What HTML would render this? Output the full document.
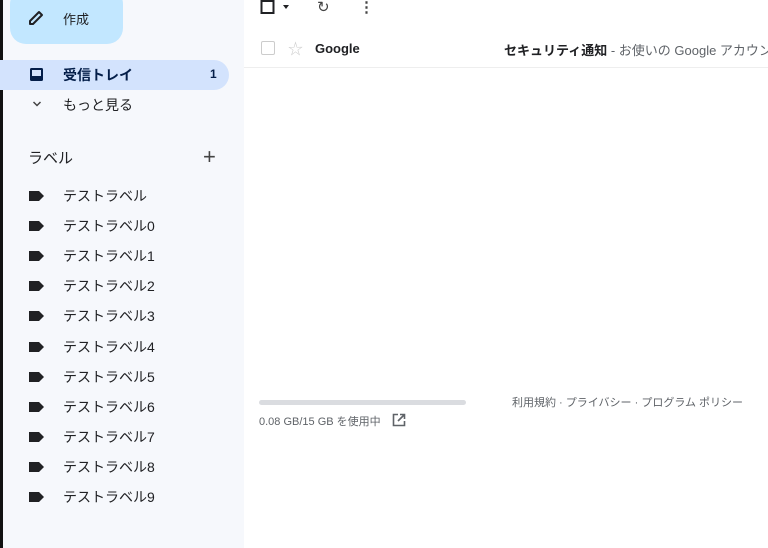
<!DOCTYPE html>
<html><head><meta charset="utf-8"><style>
body{margin:0;width:768px;height:548px;overflow:hidden;background:#fff;font-family:"Liberation Sans","Noto Sans CJK JP",sans-serif;color:#202124;position:relative}
.side{position:absolute;left:0;top:0;width:244px;height:548px;background:#f6f8fc}
.edge{position:absolute;left:0;top:0;width:3px;height:548px;background:#111}
.compose{position:absolute;left:10px;top:-12px;width:113px;height:56px;background:#c2e7ff;border-radius:16px}
.t{position:absolute;font-size:14px;white-space:nowrap}
.inbox{position:absolute;left:0;top:60px;width:229px;height:30px;background:#d3e3fd;border-radius:0 15px 15px 0}
.tag{position:absolute;left:29px;width:15px;height:10px}
</style></head><body>
<div class="side"></div><div class="edge"></div>
<div class="compose"></div>
<svg style="position:absolute;left:27px;top:9px" width="18" height="18" viewBox="0 0 18 18"><path d="M3 15 L3 12 L12 3 L15 6 L6 15 Z" fill="none" stroke="#202124" stroke-width="2" stroke-linejoin="round"/></svg>
<div class="t" style="left:63px;top:9px;font-size:13px">作成</div>
<div class="inbox"></div>
<svg style="position:absolute;left:29px;top:67px" width="15" height="15" viewBox="0 0 15 15"><rect x="1" y="1" width="13" height="13" rx="1.5" fill="#041e49"/><rect x="3" y="3" width="9" height="6" fill="#d3e3fd"/></svg>
<div class="t" style="left:63px;top:65px;font-weight:bold;color:#041e49">受信トレイ</div>
<div class="t" style="left:210px;top:67px;font-size:12px;font-weight:bold;color:#041e49">1</div>
<svg style="position:absolute;left:32px;top:100px" width="10" height="8" viewBox="0 0 10 8"><path d="M1.5 2 L5 5.5 L8.5 2" fill="none" stroke="#444" stroke-width="1.5"/></svg>
<div class="t" style="left:63px;top:95px">もっと見る</div>
<div class="t" style="left:28px;top:147px;font-size:15px">ラベル</div>
<div class="t" style="left:203px;top:144px;font-size:22px;font-weight:300;color:#444">+</div>
<svg style="position:absolute;left:260px;top:0px" width="32" height="16" viewBox="0 0 32 16"><rect x="1.5" y="1" width="12" height="12" fill="none" stroke="#202124" stroke-width="2"/><path d="M23 5 L29 5 L26 9 Z" fill="#202124"/></svg>
<div class="t" style="left:317px;top:-2px;font-size:15px;color:#444">↻</div>
<div class="t" style="left:359px;top:-2px;font-size:15px;color:#444;font-weight:bold">⋮</div>
<div style="position:absolute;left:261px;top:41px;width:12px;height:12px;border:1.5px solid #ccc;border-radius:2px"></div>
<div class="t" style="left:288px;top:38px;font-size:15px;color:#ccc">☆</div>
<div class="t" style="left:315px;top:41px;font-size:13px;font-weight:bold">Google</div>
<div class="t" style="left:504px;top:40px;font-size:13px"><b>セキュリティ通知</b><span style="color:#5f6368"> - お使いの Google アカウント</span></div>
<div style="position:absolute;left:244px;top:67px;width:524px;height:1px;background:#eee"></div>
<div style="position:absolute;left:259px;top:400px;width:207px;height:5px;background:#dadce0;border-radius:3px"></div>
<div class="t" style="left:259px;top:413px;font-size:11px;color:#5f6368">0.08 GB/15 GB を使用中</div>
<svg style="position:absolute;left:392px;top:413px" width="14" height="14" viewBox="0 0 14 14"><path d="M6 1.5 H1.5 V12.5 H12.5 V8 M8 1.5 H12.5 V6 M12.5 1.5 L6 8" fill="none" stroke="#5f6368" stroke-width="1.6"/></svg>
<div class="t" style="left:512px;top:394px;font-size:11px;color:#5f6368">利用規約 · プライバシー · プログラム ポリシー</div>
<div style="position:absolute;left:0;top:0">
<svg class="tag" style="top:191px" viewBox="0 0 15 10"><path d="M0 0H10L15 5L10 10H0Z" fill="#202124"/></svg><div class="t" style="left:63px;top:186px">テストラベル</div>
<svg class="tag" style="top:221px" viewBox="0 0 15 10"><path d="M0 0H10L15 5L10 10H0Z" fill="#202124"/></svg><div class="t" style="left:63px;top:216px">テストラベル0</div>
<svg class="tag" style="top:251px" viewBox="0 0 15 10"><path d="M0 0H10L15 5L10 10H0Z" fill="#202124"/></svg><div class="t" style="left:63px;top:246px">テストラベル1</div>
<svg class="tag" style="top:281px" viewBox="0 0 15 10"><path d="M0 0H10L15 5L10 10H0Z" fill="#202124"/></svg><div class="t" style="left:63px;top:276px">テストラベル2</div>
<svg class="tag" style="top:311px" viewBox="0 0 15 10"><path d="M0 0H10L15 5L10 10H0Z" fill="#202124"/></svg><div class="t" style="left:63px;top:306px">テストラベル3</div>
<svg class="tag" style="top:342px" viewBox="0 0 15 10"><path d="M0 0H10L15 5L10 10H0Z" fill="#202124"/></svg><div class="t" style="left:63px;top:337px">テストラベル4</div>
<svg class="tag" style="top:372px" viewBox="0 0 15 10"><path d="M0 0H10L15 5L10 10H0Z" fill="#202124"/></svg><div class="t" style="left:63px;top:367px">テストラベル5</div>
<svg class="tag" style="top:402px" viewBox="0 0 15 10"><path d="M0 0H10L15 5L10 10H0Z" fill="#202124"/></svg><div class="t" style="left:63px;top:397px">テストラベル6</div>
<svg class="tag" style="top:432px" viewBox="0 0 15 10"><path d="M0 0H10L15 5L10 10H0Z" fill="#202124"/></svg><div class="t" style="left:63px;top:427px">テストラベル7</div>
<svg class="tag" style="top:462px" viewBox="0 0 15 10"><path d="M0 0H10L15 5L10 10H0Z" fill="#202124"/></svg><div class="t" style="left:63px;top:457px">テストラベル8</div>
<svg class="tag" style="top:492px" viewBox="0 0 15 10"><path d="M0 0H10L15 5L10 10H0Z" fill="#202124"/></svg><div class="t" style="left:63px;top:487px">テストラベル9</div>
</div>
</body></html>
